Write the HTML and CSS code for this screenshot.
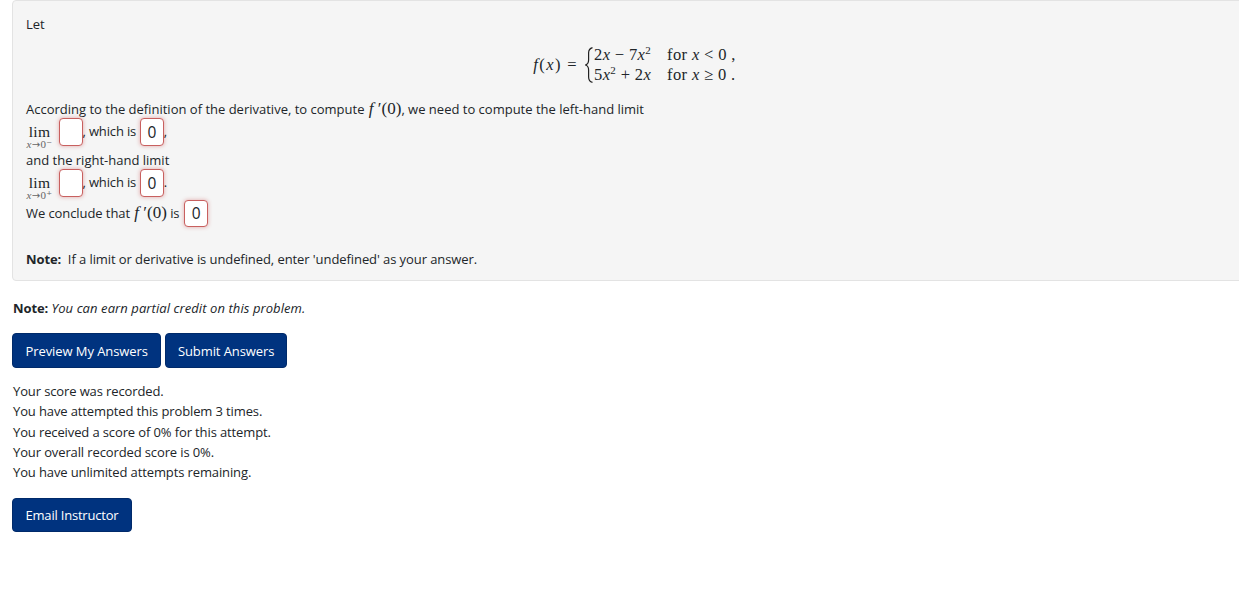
FILE: index.html
```html
<!DOCTYPE html>
<html lang="en">
<head>
<meta charset="utf-8">
<title>Problem</title>
<link rel="stylesheet" href="styles.css">
</head>
<body>
<main class="page">
  <section class="well">
    <p class="let">Let</p>
    <div class="display">
      <span class="math fx"><i>f</i>(<i>x</i>) =</span>
      <svg class="brace" viewBox="0 0 8 36" aria-hidden="true"><path d="M7.5 .6C4.6 1.4 3.6 3 3.6 6V13C3.6 15.8 3 17.2 .5 18C3 18.8 3.6 20.2 3.6 23V30C3.6 33 4.6 34.6 7.5 35.4" fill="none" stroke="#222" stroke-width="1.2"/></svg>
      <div class="cases math">
        <span class="case-l">2<i>x</i> − 7<i>x</i><sup>2</sup></span><span>for <i>x</i> &lt; 0 ,</span>
        <span class="case-l">5<i>x</i><sup>2</sup> + 2<i>x</i></span><span>for <i>x</i> ≥ 0 .</span>
      </div>
    </div>
    <p class="line first">According to the definition of the derivative, to compute <span class="math fp"><i>f</i> ′(0)</span>, we need to compute the left-hand limit</p>
    <div class="lim-row">
      <span class="lim math">lim<small><i>x</i><span class="arrow">→</span>0⁻</small></span>
      <span class="box"></span><span class="after">, which is</span><span class="box val">0</span><span class="tail">,</span>
    </div>
    <p class="line plain">and the right-hand limit</p>
    <div class="lim-row">
      <span class="lim math">lim<small><i>x</i><span class="arrow">→</span>0⁺</small></span>
      <span class="box"></span><span class="after">, which is</span><span class="box val">0</span><span class="tail">.</span>
    </div>
    <div class="concl">We conclude that <span class="math fp"><i>f</i> ′(0)</span> is<span class="box val short">0</span></div>
    <p class="well-note"><b>Note:</b>&nbsp; If a limit or derivative is undefined, enter 'undefined' as your answer.</p>
  </section>
  <p class="credit"><b>Note:</b> <em>You can earn partial credit on this problem.</em></p>
  <div class="actions">
    <button class="btn" type="button">Preview My Answers</button>
    <button class="btn submit" type="button">Submit Answers</button>
  </div>
  <div class="status">
    <div>Your score was recorded.</div>
    <div>You have attempted this problem 3 times.</div>
    <div>You received a score of 0% for this attempt.</div>
    <div>Your overall recorded score is 0%.</div>
    <div>You have unlimited attempts remaining.</div>
  </div>
  <button class="btn email" type="button">Email Instructor</button>
</main>
</body>
</html>
```
FILE: styles.css
```css
html, body { margin: 0; padding: 0; overflow: hidden; background: #fff; }
body { font-family: "Open Sans", "Noto Sans", sans-serif; font-size: 13px; letter-spacing: -.08px; line-height: 20.3px; color: #212529; height: 599px; }
p { margin: 0; }
.page { padding: 0 0 0 12px; width: 1245px; }
.well { box-sizing: border-box; height: 281px; padding: 13px 13px 0; background: #f5f5f5; border: 1px solid #e3e3e3; border-radius: 4px; }
.let { height: 20px; }
.display { display: flex; justify-content: center; align-items: center; height: 42px; margin-top: 10px; }
.math { font-family: "Liberation Serif", "DejaVu Serif", serif; font-size: 16.5px; letter-spacing: .35px; }
.fx { letter-spacing: 1.4px; white-space: nowrap; }
.brace { width: 8px; height: 36px; margin: 0 1px 0 7px; }
.cases { display: grid; grid-template-columns: auto auto; column-gap: 16px; line-height: 20.5px; }
.case-l { white-space: nowrap; }
sup { font-size: 11px; line-height: 0; }
.line { box-sizing: border-box; height: 20.3px; }
.plain { letter-spacing: 0; padding-top: 1px; }
.first { margin: 13px 0 -1px; letter-spacing: 0; }
.fp { font-size: 17px; letter-spacing: 0; margin-left: 1px; }
.lim-row { display: flex; align-items: flex-start; height: 30.7px; }
.lim { display: flex; flex-direction: column; align-items: center; width: 27px; margin-right: 6px; padding-top: 6px; font-size: 15.5px; line-height: 15px; }
.lim small { font-size: 11px; line-height: 11px; color: #666; white-space: nowrap; letter-spacing: .3px; }
.arrow { font-family: "DejaVu Sans", sans-serif; font-size: 10px; }
.box { box-sizing: border-box; display: inline-flex; justify-content: center; align-items: center; width: 23.5px; height: 28px; background: #fff; border: 1px solid #c8605f; border-radius: 4px; box-shadow: 0 0 4px rgba(200, 70, 70, .45); font-size: 15.5px; }
.after { padding: 3px 4px 0 0; white-space: nowrap; letter-spacing: -.15px; }
.tail { padding-top: 3px; }
.concl { display: flex; align-items: center; height: 27px; white-space: pre; }
.box.short { margin-left: 5px; height: 27px; }
.well-note { margin-top: 22px; }
.credit { margin: 17px 0 0 1px; }
.credit em { letter-spacing: .08px; }
.actions { display: flex; gap: 4px; margin-top: 15px; }
.btn { box-sizing: border-box; height: 35px; padding: 0 12.5px; font: inherit; letter-spacing: inherit; color: #fff; background: #00337f; border: 1px solid #002a6a; border-radius: 4px; white-space: nowrap; }
.btn.submit { padding: 0 11.5px; }
.status { margin: 12.8px 0 0 1px; letter-spacing: -.12px; }
.email { display: block; height: 34px; margin-top: 15.2px; padding-top: 1px; letter-spacing: -.2px; }
```
